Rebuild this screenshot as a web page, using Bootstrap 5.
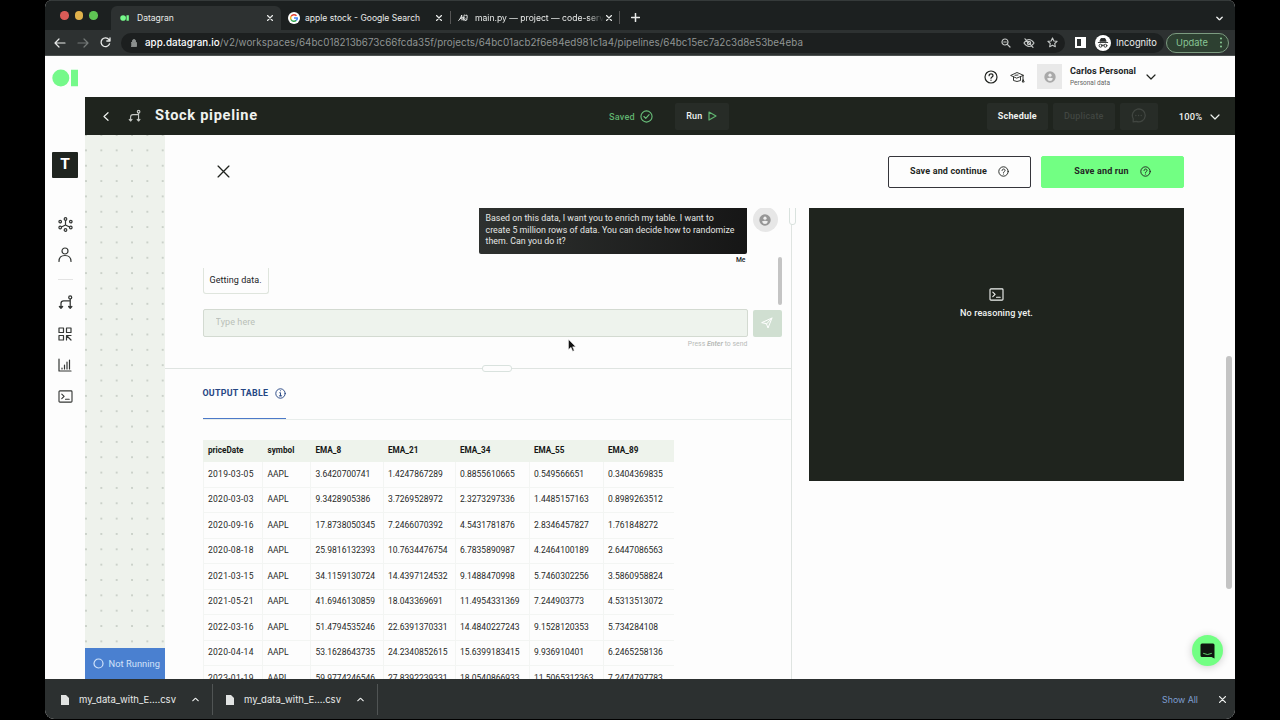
<!DOCTYPE html>
<html lang="en">
<head>
<meta charset="utf-8">
<meta name="viewport" content="width=device-width, initial-scale=1">
<title>Datagran</title>
<link href="https://cdn.jsdelivr.net/npm/bootstrap@5.3.0/dist/css/bootstrap.min.css" rel="stylesheet">
<style>
body{background:#000;font-family:Roboto,"Liberation Sans",sans-serif;font-size:9px;line-height:12px;color:#20231f;height:720px;overflow:hidden}
svg{display:block;flex:none;fill:none;stroke:currentColor;stroke-width:1.2;stroke-linecap:round;stroke-linejoin:round}
.browser{width:1190px;height:719px;margin-left:45px;background:#fdfdfd;border-radius:7px 7px 9px 9px;overflow:hidden}
.chrome{font-family:Inter,"Liberation Sans",sans-serif;color:#e9ebea;font-size:8.55px;white-space:nowrap}
.tabstrip{height:30px;flex:none;background:#1c2020;padding:5px 15px 0 15px;border-top:1px solid #353a3a}
.lights{width:51px;height:19px;gap:6px}
.lights i{width:8.6px;height:8.6px;border-radius:50%}
.btab{height:24px;padding-bottom:1px}
.btab.current{width:170px;background:#2d3131;border-radius:6px 6px 0 0;padding-left:9px;padding-right:8px}
.addressbar{height:26px;flex:none;background:#2d3131;border-bottom:1px solid #4c5150;padding-left:9px;padding-right:6px}
.omnibox{width:944px;height:20px;border-radius:10px;background:#1c1f1f;padding-left:10px;padding-right:7px;font-size:9.8px;color:#8f9493;letter-spacing:.06px}
.omnibox b{font-weight:500;color:#fff}
.incog{height:20px;width:69px;border-radius:10px;background:#1d2121;font-size:9.3px;padding-left:0}
.update{height:20px;width:63px;border-radius:10px;border:1px solid #7c9b80;background:#2d4031;color:#89c795;font-size:9.3px;padding:0 5px 0 9px}
.rail{width:40px;flex:none;color:#343735}
.rail .brand{height:41px;padding-left:7px}
.team{width:26px;height:26px;background:#1f241f;color:#fff;font-size:15.5px;font-weight:700;margin-top:55px;border-radius:1px;padding-bottom:2px}
.rail hr{width:15px;margin:16px 0 15px;border-color:#999;height:1px}
.apphead{height:41px;flex:none;padding-left:899px}
.avatar{width:25px;height:25px;background:#e9e9e9;color:#a9a9a9}
.toolbar{height:38px;flex:none;background:#1f241e;color:#eff2ef;font-weight:500;letter-spacing:.2px;padding-left:16px}
.toolbar .tool{height:27px;background:#272c27;border-radius:2px;padding-bottom:1px}
.canvas{width:80px;flex:none;background-color:#eef2ec;background-image:radial-gradient(circle at center,#c6cdc5 0,#c6cdc5 .65px,transparent .9px);background-size:15.35px 15.35px;background-position:-6.7px 7.7px}
.runstate{height:31px;background:#4a80d0;color:#d2e3fa;font-size:9.3px;letter-spacing:.05px;padding-left:7.5px;white-space:nowrap}
.edhead{height:73px;flex:none;padding:0 51px 0 52px}
.act{width:143px;height:32px;border-radius:2px;border:1px solid #35353b;font-size:9px;font-weight:700;letter-spacing:.17px;padding:0;color:#232623}
.act.go{background:#72ff83;border-color:#72ff83}
.leftpane{width:627px;flex:none;border-right:1px solid #dfe4e1}
.chat{height:161px;flex:none;border-bottom:1px solid #dfe4e1;padding-left:37.5px}
.bubble{width:268px;height:46px;background:linear-gradient(90deg,#2e312f,#161616);color:#e5e7e5;font-size:8.8px;line-height:11.7px;letter-spacing:.03px;padding:5px 7px 0;border-radius:0 0 2px 2px;margin-left:276px;white-space:nowrap}
.reply{width:66px;height:26px;border:1px solid #dfe5dd;border-top:0;border-radius:0 0 3px 3px;margin-top:2px;padding:6px 0 0 6px;letter-spacing:.06px}
.say{width:545px;height:28px;border:1px solid #d3dad1;border-radius:2px;background:#eef3ed;padding:0 12px 2px;font-size:9px;letter-spacing:.1px}
.say::placeholder{color:#b9bfb8;opacity:1}
.send{width:29px;height:27px;background:#d0dfd1;border-radius:2px;color:#fff}
.grip{border:1px solid #d9e2de;background:#fdfdfd;position:absolute}
.output{padding:16px 0 0 37.5px}
.outtab{width:83px;height:33.5px;color:#264684;font-weight:700;font-size:8.9px;letter-spacing:.25px;white-space:nowrap;padding-bottom:17px;box-shadow:inset 0 -1px #4c79c8}
.grid-data{width:470.5px;table-layout:fixed;margin-top:20px;font-size:8.5px;line-height:12px;white-space:nowrap;color:#272927}
.grid-data th{height:22px;background:#eef3ec;padding:0 0 1px 5px;font-size:8.2px;font-weight:700;color:#161816}
.grid-data td{height:25.5px;padding:0 0 1px 4.5px;border:1px solid #f3f5f3;border-width:0 0 1px 1px}
.grid-data td:first-child{letter-spacing:.28px}
.reasoning{width:375px;height:273px;background:#1f241e;color:#f1f3f1;margin-left:17px;padding-top:80px;font-size:9.1px;font-weight:500;letter-spacing:.1px}
.thumb{background:#c4c4c4;border-radius:3px;position:absolute}
.helpchat{position:absolute;right:12px;bottom:13px;width:31px;height:31px;border-radius:50%;background:#72ff83;box-shadow:0 1px 9px #0003}
.shelf{height:40px;flex:none;background:#2c3030;font-size:9.5px;padding-top:1px}
.shelf .dl{width:165px;height:31px;border-right:1px solid #505454}
.pointer{position:absolute;left:568px;top:339px;z-index:5}
</style>
</head>
<body>
<svg width="0" height="0" class="position-absolute">
 <symbol id="x" viewBox="0 0 12 12"><path d="M1 1l10 10M11 1L1 11"/></symbol>
 <symbol id="down" viewBox="0 0 10 6"><path d="M1 1l4 4 4-4"/></symbol>
 <symbol id="help" viewBox="0 0 14 14"><circle cx="7" cy="7" r="6"/><path d="M5.1 5.7c0-2.5 3.9-2.5 3.9 0C9 6.9 7 7 7 8.3M7 10.2v.1"/></symbol>
 <symbol id="flow" viewBox="0 0 14 14"><circle cx="11.4" cy="2.3" r="1.4"/><path d="M11.4 3.9v8M2.8 12V8q0-2.500 2.500-2.500h6M1.3 10.700l1.500 1.700 1.500-1.700M9.900 10.700l1.500 1.700 1.500-1.700"/></symbol>
 <symbol id="term" viewBox="0 0 16 14"><rect x="1" y="1" width="14" height="12" rx="1"/><path d="M4 4.500l2.500 2.400L4 9.400M8 10h4"/></symbol>
 <symbol id="face" viewBox="0 0 12 12"><circle cx="6" cy="6" r="5.700" fill="currentColor" stroke="none"/><circle cx="6" cy="4.200" r="1.600" fill="#eee" stroke="none"/><path d="M3 7.500q3-1.600 6 0Q8 10 6 10T3 7.500" fill="#eee" stroke="none"/></symbol>
 <symbol id="logo" viewBox="0 0 26 18"><circle cx="8.800" cy="9" r="8.500" fill="#75f98a" stroke="none"/><path d="M19 .7h7v16.600h-7z" fill="#75f98a" stroke="none"/></symbol>
</svg>

<main class="browser d-flex flex-column position-relative">
 <div class="chrome tabstrip d-flex">
  <div class="lights d-flex align-items-center"><i style="background:#db5b57"></i><i style="background:#e0b14b"></i><i style="background:#5fc454"></i></div>
  <div class="btab current d-flex align-items-center"><svg width="9" height="6"><use href="#logo"/></svg><span class="ms-2 me-auto">Datagran</span><svg width="6" height="6"><use href="#x" stroke-width="2.400"/></svg></div>
  <div class="btab d-flex align-items-center" style="width:169px;padding-left:7px">
   <svg width="12" height="12" viewBox="0 0 12 12"><circle cx="6" cy="6" r="6" fill="#fff" stroke="none"/><g stroke-width="1.500" stroke-linecap="butt"><path d="M8.500 3.800A3.400 3.400 0 003 4.500" stroke="#e34133"/><path d="M3 4.400a3.400 3.400 0 000 3.200" stroke="#f3b51b"/><path d="M3 7.500a3.400 3.400 0 005.200.9" stroke="#35a853"/><path d="M8.200 8.500A3.400 3.400 0 009.400 6H6" stroke="#4285f4"/></g></svg>
   <span style="margin-left:5px">apple stock - Google Search</span><svg class="ms-auto" width="6" height="6" style="margin-right:8px"><use href="#x" stroke-width="2.400"/></svg></div>
  <div class="btab d-flex align-items-center" style="width:170px;padding-left:8px;background:linear-gradient(#555,#555) 0 5px/1px 13px no-repeat,linear-gradient(#555,#555) 169px 5px/1px 13px no-repeat">
   <svg width="11" height="9" viewBox="0 0 11 9"><path d="M.7 7.500q2-.5 3-5.500l.3 5M2 5.500l2.500-.8M6.300 2L5 7q2 .5 2-1.300T5.300 5M7.700 2.200q2-1 1.500 1.600T8.800 7L7 7.500" stroke-width="1"/></svg>
   <span style="margin-left:6px;font-size:8.600px;-webkit-mask:linear-gradient(90deg,#000 87%,transparent)">main.py — project — code-serv</span><svg class="ms-auto" width="6" height="6" style="margin-right:8px"><use href="#x" stroke-width="2.400"/></svg></div>
  <svg width="9" height="9" viewBox="0 0 9 9" style="margin:7px 0 0 11px"><path d="M4.500.5v8M.5 4.500h8" stroke-width="1.500"/></svg>
  <svg class="ms-auto" width="7" height="5" viewBox="0 0 10 6" style="margin-top:10px;margin-right:-3px"><use href="#down" stroke-width="2"/></svg>
 </div>

 <div class="chrome addressbar d-flex align-items-center">
  <svg width="12" height="10" viewBox="0 0 12 10"><path d="M11 5H1.500M5 1L1 5l4 4"/></svg>
  <svg width="12" height="10" viewBox="0 0 12 10" style="margin-left:11px;color:#747978"><path d="M1 5h9.500M7 1l4 4-4 4"/></svg>
  <svg width="11" height="11" viewBox="0 0 11 11" style="margin-left:11px"><path d="M9.600 6.800A4.400 4.400 0 119 2.600L10 4M10 .8V4H6.800" stroke-width="1.300"/></svg>
  <div class="omnibox d-flex align-items-center" style="margin-left:10px">
   <svg width="6" height="8" viewBox="0 0 6 8"><path d="M.5 3.500h5v4h-5zM1.500 3V2q0-1.400 1.500-1.400T4.500 2v1" fill="#8c908f" stroke="#8c908f" stroke-width=".9"/></svg>
   <span style="margin-left:8px"><b>app.datagran.io</b>/v2/workspaces/64bc018213b673c66fcda35f/projects/64bc01acb2f6e84ed981c1a4/pipelines/64bc15ec7a2c3d8e53be4eba</span>
   <div class="ms-auto d-flex align-items-center" style="gap:12px;color:#c4c7c6">
    <svg width="10" height="10" viewBox="0 0 10 10"><circle cx="4" cy="4" r="3"/><path d="M6.300 6.300L9 9M2.800 4h2.400"/></svg>
    <svg width="12" height="10" viewBox="0 0 12 10"><path d="M1 5q5-7 10 0-5 7-10 0M2 .8l8 8.500"/><circle cx="6" cy="5" r="1.600"/></svg>
    <svg width="11" height="11" viewBox="0 0 12 12"><path d="M6 1l1.500 3.300 3.500.4-2.600 2.400.7 3.500L6 8.900l-3.100 1.700.7-3.500L1 4.700l3.500-.4z"/></svg>
   </div>
  </div>
  <svg width="11" height="11" viewBox="0 0 11 11" style="margin-left:10px"><path d="M0 0h11v11H0zM2 2v7h4V2z" fill="#fff" fill-rule="evenodd" stroke="none"/></svg>
  <div class="incog d-flex align-items-center" style="margin-left:9px"><svg width="16" height="16" viewBox="0 0 16 16"><circle cx="8" cy="8" r="8" fill="#fff" stroke="none"/><g stroke="#292c2c" stroke-width=".9"><path d="M5 6l1-2.500h4L11 6z" fill="#292c2c"/><path d="M3.300 7.500h9.400M7 10.200q1-.6 2 0"/><circle cx="5.600" cy="10.700" r="1.500"/><circle cx="10.400" cy="10.700" r="1.500"/></g></svg><span style="margin-left:5px">Incognito</span></div>
  <div class="update d-flex align-items-center justify-content-between ms-auto">Update<svg width="4" height="11" viewBox="0 0 4 11"><g fill="currentColor" stroke="none"><circle cx="2" cy="1.500" r="1"/><circle cx="2" cy="5.500" r="1"/><circle cx="2" cy="9.500" r="1"/></g></svg></div>
 </div>

 <div class="d-flex flex-grow-1 overflow-hidden">
  <nav class="rail d-flex flex-column align-items-center">
   <div class="brand w-100 d-flex align-items-center"><svg width="26" height="18" style="margin-top:2px"><use href="#logo"/></svg></div>
   <div class="team d-flex align-items-center justify-content-center">T</div>
   <svg width="15" height="15" viewBox="0 0 15 15" style="margin-top:39px"><circle cx="7.500" cy="2" r="1.300"/><circle cx="2.200" cy="4.600" r="1.300"/><circle cx="12.800" cy="4.600" r="1.300"/><circle cx="2.200" cy="10.500" r="1.300"/><circle cx="12.800" cy="10.500" r="1.300"/><circle cx="7.500" cy="13" r="1.300"/><path d="M7.500 3.500V8M7.500 8L3.500 10M7.500 8l4 2"/></svg>
   <svg width="14" height="16" viewBox="0 0 14 16" style="margin-top:15px"><circle cx="7" cy="4" r="3"/><path d="M1 14.500q0-6 6-6t6 6"/></svg>
   <hr>
   <svg width="15" height="15" viewBox="0 0 14 14"><use href="#flow"/></svg>
   <svg width="14" height="14" viewBox="0 0 14 14" style="margin-top:17px"><path d="M1 1h4.500v4.500H1zM8.500 1H13v4.500H8.500zM1 8.500h4.500V13H1zM8.500 13V8.500H13M9 9l4 4"/></svg>
   <svg width="14" height="14" viewBox="0 0 14 14" style="margin-top:17px"><path d="M1 1v12h12M4 11v-1M6.500 11V7M9 11V4M11.500 11V2"/></svg>
   <svg width="15" height="13" style="margin-top:18px"><use href="#term"/></svg>
  </nav>

  <div class="d-flex flex-column flex-grow-1">
   <header class="apphead d-flex align-items-center">
    <svg width="14" height="14"><use href="#help"/></svg>
    <svg width="15" height="12" viewBox="0 0 15 12" style="margin-left:12px"><path d="M1 4.300L7 1.500l6.500 2.800L7 7zM3.500 6v3.500q3.500 2 7 0V6M5 4.300l3-.3M13 4.500v5M13 9l-.8 2h1.600z" stroke-width=".9"/></svg>
    <div class="avatar d-flex align-items-center justify-content-center" style="margin-left:12px"><svg width="12" height="12"><use href="#face"/></svg></div>
    <div style="margin-left:8px"><div class="fw-bold" style="font-size:9.100px;letter-spacing:.08px">Carlos Personal</div><div style="font-size:6.500px;color:#646664">Personal data</div></div>
    <svg width="10" height="6" style="margin-left:10px"><use href="#down"/></svg>
   </header>
   <div class="toolbar d-flex align-items-center">
    <svg width="7" height="9" viewBox="0 0 7 9" style="margin-left:1px"><path d="M6 .7L2 4.500l4 3.800"/></svg>
    <svg width="13" height="14" viewBox="0 0 14 14" style="margin-left:19px" opacity=".8"><use href="#flow"/></svg>
    <h1 class="m-0 fw-bold flex-shrink-0" style="font-size:14.600px;width:468px;padding:0 0 2px 14px;letter-spacing:.7px;line-height:18px">Stock pipeline</h1>
    <span style="color:#5fb36f;font-size:9.100px;padding-top:1px">Saved</span>
    <svg width="13" height="13" viewBox="0 0 14 14" style="margin-left:5px;color:#69bf7a"><circle cx="7" cy="7" r="6"/><path d="M4.200 7l2 2 3.600-4"/></svg>
    <div class="tool d-flex align-items-center justify-content-center" style="width:54px;margin-left:22px;gap:6px">Run<svg width="9" height="10" viewBox="0 0 9 10" style="color:#5fb36f"><path d="M1 1l7 4-7 4z"/></svg></div>
    <div class="tool d-flex align-items-center justify-content-center" style="width:61px;margin-left:258px;font-weight:700">Schedule</div>
    <div class="tool d-flex align-items-center justify-content-center" style="width:62px;margin-left:5px;color:#414641">Duplicate</div>
    <div class="tool d-flex align-items-center justify-content-center" style="width:38px;margin-left:5px;color:#414641"><svg width="15" height="15" viewBox="0 0 14 14"><path d="M2 13l.1-3A6 6 0 115 12.500zM4.500 7h.1M7 7h.1M9.500 7h.1"/></svg></div>
    <span style="margin-left:21px;font-size:9.300px;padding-top:1px">100%</span>
    <svg width="10" height="6" style="margin-left:8px;margin-top:1px"><use href="#down"/></svg>
   </div>

   <div class="d-flex flex-grow-1 overflow-hidden">
    <aside class="canvas d-flex flex-column justify-content-end"><div class="runstate d-flex align-items-center"><svg width="11" height="11" viewBox="0 0 11 11"><circle cx="5.500" cy="5.500" r="4.500"/></svg><span style="margin-left:5px">Not Running</span></div></aside>
    <section class="d-flex flex-column flex-grow-1">
     <div class="edhead d-flex align-items-center">
      <svg class="me-auto" width="13" height="13"><use href="#x"/></svg>
      <button class="btn act d-flex align-items-center justify-content-center" style="gap:11px">Save and continue<svg width="11" height="11" viewBox="0 0 14 14"><use href="#help"/></svg></button>
      <button class="btn act go d-flex align-items-center justify-content-center" style="gap:11px;margin-left:10px">Save and run<svg width="11" height="11" viewBox="0 0 14 14"><use href="#help"/></svg></button>
     </div>
     <div class="d-flex flex-grow-1 overflow-hidden">
      <div class="leftpane d-flex flex-column position-relative">
       <div class="chat">
        <div class="d-flex"><div class="bubble">Based on this data, I want you to enrich my table. I want to<br>create 5 million rows of data. You can decide how to randomize<br>them. Can you do it?</div>
         <div class="rounded-circle d-flex align-items-center justify-content-center" style="width:25px;height:25px;background:#e7e7e7;color:#969696;margin:-1px 0 0 6px"><svg width="12" height="12"><use href="#face"/></svg></div></div>
        <div class="text-end" style="width:543px;font-size:6.800px;font-weight:500">Me</div>
        <div class="reply">Getting data.</div>
        <div class="d-flex align-items-center" style="margin-top:15px;gap:5px"><input class="say form-control" placeholder="Type here"><div class="send d-flex align-items-center justify-content-center"><svg width="12" height="12" viewBox="0 0 12 12"><path d="M1 5.500L11 1 7 11 5.500 7zM5.500 7L11 1" stroke-width="1"/></svg></div></div>
        <div class="text-end" style="width:545px;font-size:6.800px;color:#b7bab7;margin-top:1px;letter-spacing:.06px">Press <b class="fst-italic fw-bold">Enter</b> to send</div>
       </div>
       <div class="grip" style="left:317px;top:157px;width:30px;height:7px;border-radius:3px"></div>
       <div class="grip" style="right:-5px;top:-10px;width:7px;height:27px;border-radius:3px"></div>
       <div class="thumb" style="left:613px;top:49px;width:4px;height:48px"></div>
       <div class="output">
        <div style="border-bottom:1px solid #e8edeb"><div class="outtab d-flex align-items-center justify-content-between">OUTPUT TABLE<svg width="11" height="11" viewBox="0 0 14 14"><circle cx="7" cy="7" r="6"/><path d="M6 6h1v4M5.500 10h3M7 3.500v.1"/></svg></div></div>
        <table class="grid-data">
         <colgroup><col style="width:59.500px"><col style="width:48px"><col style="width:72.500px"><col style="width:72px"><col style="width:74px"><col style="width:74px"><col style="width:70.500px"></colgroup>
         <thead><tr><th>priceDate</th><th>symbol</th><th>EMA_8</th><th>EMA_21</th><th>EMA_34</th><th>EMA_55</th><th>EMA_89</th></tr></thead>
         <tbody>
          <tr><td>2019-03-05</td><td>AAPL</td><td>3.6420700741</td><td>1.4247867289</td><td>0.8855610665</td><td>0.549566651</td><td>0.3404369835</td></tr>
          <tr><td>2020-03-03</td><td>AAPL</td><td>9.3428905386</td><td>3.7269528972</td><td>2.3273297336</td><td>1.4485157163</td><td>0.8989263512</td></tr>
          <tr><td>2020-09-16</td><td>AAPL</td><td>17.8738050345</td><td>7.2466070392</td><td>4.5431781876</td><td>2.8346457827</td><td>1.761848272</td></tr>
          <tr><td>2020-08-18</td><td>AAPL</td><td>25.9816132393</td><td>10.7634476754</td><td>6.7835890987</td><td>4.2464100189</td><td>2.6447086563</td></tr>
          <tr><td>2021-03-15</td><td>AAPL</td><td>34.1159130724</td><td>14.4397124532</td><td>9.1488470998</td><td>5.7460302256</td><td>3.5860958824</td></tr>
          <tr><td>2021-05-21</td><td>AAPL</td><td>41.6946130859</td><td>18.043369691</td><td>11.4954331369</td><td>7.244903773</td><td>4.5313513072</td></tr>
          <tr><td>2022-03-16</td><td>AAPL</td><td>51.4794535246</td><td>22.6391370331</td><td>14.4840227243</td><td>9.1528120353</td><td>5.734284108</td></tr>
          <tr><td>2020-04-14</td><td>AAPL</td><td>53.1628643735</td><td>24.2340852615</td><td>15.6399183415</td><td>9.936910401</td><td>6.2465258136</td></tr>
          <tr><td>2023-01-19</td><td>AAPL</td><td>59.9774246546</td><td>27.8392239331</td><td>18.0540866933</td><td>11.5065312363</td><td>7.2474797783</td></tr>
         </tbody>
        </table>
       </div>
      </div>
      <div class="flex-grow-1 position-relative">
       <div class="reasoning d-flex flex-column align-items-center"><svg width="15" height="13"><use href="#term"/></svg><div style="margin-top:6px">No reasoning yet.</div></div>
       <div class="thumb" style="right:3px;top:148px;width:6px;height:233px"></div>
       <div class="helpchat d-flex align-items-center justify-content-center"><svg width="15" height="16" viewBox="0 0 15 16"><path d="M2 .5h11q1.500 0 1.500 1.500v13.500L11.500 14H2Q.5 14 .5 12.500V2Q.5.5 2 .5" fill="#101510" stroke="none"/><path d="M3.500 10.500q4 2.300 8 0" stroke="#72ff83" stroke-width=".8"/></svg></div>
      </div>
     </div>
    </section>
   </div>
  </div>
 </div>

 <footer class="chrome shelf d-flex align-items-center">
  <div class="dl d-flex align-items-center" style="width:168px;padding-left:16px"><svg width="8" height="10" viewBox="0 0 8 10"><path d="M0 0h5l3 3v7H0z" fill="#e1e3e2" stroke="none"/></svg><span style="margin-left:10px">my_data_with_E....csv</span><svg width="7" height="5" viewBox="0 0 10 6" style="transform:scaleY(-1);margin-left:16px"><use href="#down" stroke-width="1.700"/></svg></div>
  <div class="dl d-flex align-items-center" style="padding-left:13px"><svg width="8" height="10" viewBox="0 0 8 10"><path d="M0 0h5l3 3v7H0z" fill="#e1e3e2" stroke="none"/></svg><span style="margin-left:10px">my_data_with_E....csv</span><svg width="7" height="5" viewBox="0 0 10 6" style="transform:scaleY(-1);margin-left:16px"><use href="#down" stroke-width="1.700"/></svg></div>
  <span class="ms-auto" style="color:#7f9fd0;font-size:8.800px">Show All</span>
  <svg width="7" height="7" style="margin:0 9px 0 21px"><use href="#x" stroke-width="2.200"/></svg>
 </footer>
</main>
<svg class="pointer" width="8" height="13" viewBox="0 0 8 13"><path d="M.5.500v10L3 8.300l1.700 4 1.500-.7L4.600 7.800h3z" fill="#111" stroke="#eee" stroke-width=".5"/></svg>
<script src="https://cdn.jsdelivr.net/npm/bootstrap@5.3.0/dist/js/bootstrap.bundle.min.js"></script>
</body>
</html>
